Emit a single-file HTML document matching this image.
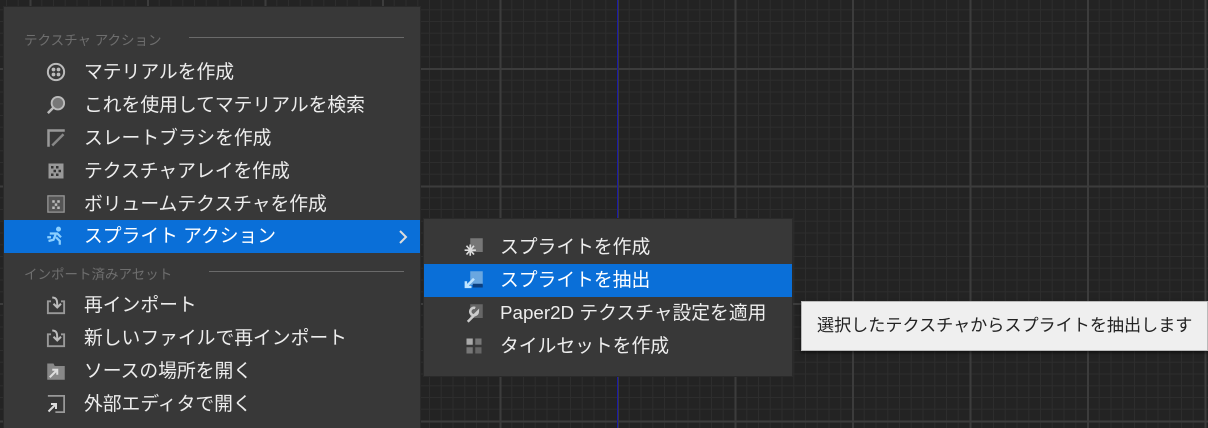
<!DOCTYPE html>
<html><head><meta charset="utf-8"><style>
*{margin:0;padding:0;box-sizing:border-box}
html,body{width:1208px;height:428px;overflow:hidden}
body{position:relative;background-color:#232323;
background-image:
linear-gradient(90deg,#3c3c3c 0 2px,transparent 2px),
linear-gradient(180deg,#3c3c3c 0 2px,transparent 2px),
linear-gradient(90deg,#2d2d2d 0 1px,transparent 1px),
linear-gradient(180deg,#2d2d2d 0 1px,transparent 1px);
background-size:117.5px 117.5px,117.5px 117.5px,11.75px 11.75px,11.75px 11.75px;
background-position:29.5px 0,0 68px,29.5px 0,0 68px;
font-family:"Liberation Sans","Noto Sans CJK JP",sans-serif;}
.blue{position:absolute;left:617px;top:0;width:1px;height:428px;background:#1a1aa8}
.menu{position:absolute;background:#383838;border:1px solid #2a2a2a}
.hdr{position:absolute;font-size:13.5px;color:#6e6e6e;left:20px}
.line{position:absolute;height:1px;background:#6a6a6a}
.it{position:absolute;left:0;right:0;height:33px;color:#ededed;font-size:18.8px;line-height:33px;white-space:nowrap}
.it.sel{background:#0a6fd8;color:#fff}
.it .t{position:absolute;left:80px;top:-1px}
.ic{position:absolute;width:20px;height:20px;top:6px;left:42px}
.tip{position:absolute;left:801px;top:301px;width:407px;height:50px;background:#efefef;border:1px solid #b9b9b9;box-shadow:0 2px 3px rgba(0,0,0,.5);font-size:17.1px;color:#222;line-height:48px;padding-left:15px;white-space:nowrap}
</style></head><body>
<div class="blue"></div>
<div class="menu" style="left:3px;top:6px;width:418px;height:430px">
 <div class="hdr" style="top:22px">テクスチャ アクション</div>
 <div class="line" style="left:185px;width:215px;top:30px"></div>
 <div class="it" style="top:49px"><svg class="ic" viewBox="0 0 16 16"><circle cx="8" cy="8" r="6.5" fill="none" stroke="#bbb" stroke-width="1.6"/><circle cx="6" cy="6" r="1.5" fill="#bbb"/><circle cx="10" cy="6" r="1.5" fill="#bbb"/><circle cx="6" cy="10" r="1.5" fill="#bbb"/><circle cx="10" cy="10" r="1.5" fill="#bbb"/></svg><span class="t">マテリアルを作成</span></div>
 <div class="it" style="top:82px"><svg class="ic" viewBox="0 0 16 16"><circle cx="9.5" cy="6.5" r="5" fill="#777" stroke="#bbb" stroke-width="1.5"/><path d="M6 10L1.5 14.5" stroke="#bbb" stroke-width="2"/></svg><span class="t">これを使用してマテリアルを検索</span></div>
 <div class="it" style="top:115px"><svg class="ic" viewBox="0 0 16 16"><path d="M1 1h14v2H3v12H1z" fill="#999"/><path d="M5 14L14 5" stroke="#888" stroke-width="2"/></svg><span class="t">スレートブラシを作成</span></div>
 <div class="it" style="top:148px"><svg class="ic" viewBox="0 0 16 16"><rect x="2" y="2" width="12" height="12" fill="#999"/><g fill="#333"><rect x="4" y="4" width="2" height="2"/><rect x="8" y="4" width="2" height="2"/><rect x="6" y="7" width="2" height="2"/><rect x="10" y="7" width="2" height="2"/><rect x="4" y="10" width="2" height="2"/><rect x="8" y="10" width="2" height="2"/></g></svg><span class="t">テクスチャアレイを作成</span></div>
 <div class="it" style="top:181px"><svg class="ic" viewBox="0 0 16 16"><rect x="1.5" y="1.5" width="13" height="13" fill="#555" stroke="#999"/><g fill="#bbb"><rect x="5" y="5" width="2" height="2"/><rect x="9" y="5" width="2" height="2"/><rect x="7" y="7.5" width="2" height="2"/><rect x="5" y="10" width="2" height="2"/><rect x="9" y="10" width="2" height="2"/></g></svg><span class="t">ボリュームテクスチャを作成</span></div>
 <div class="it sel" style="top:213px"><svg class="ic" viewBox="0 0 16 16"><circle cx="10" cy="2.5" r="2" fill="#8cd0ff"/><path d="M3 6h6l3 3M8 6l-2 5-4 1M8 9l3 3v3M1 9h3" stroke="#8cd0ff" stroke-width="1.8" fill="none"/></svg><span class="t">スプライト アクション</span><svg style="position:absolute;right:12px;top:10px" width="10" height="14" viewBox="0 0 10 14"><path d="M2 1l6 6-6 6" stroke="#ddd" stroke-width="2" fill="none"/></svg></div>
 <div class="hdr" style="top:256px">インポート済みアセット</div>
 <div class="line" style="left:205px;width:195px;top:264px"></div>
 <div class="it" style="top:282px"><svg class="ic" viewBox="0 0 16 16"><path d="M4 5H1.5v9.5h13V5H12" fill="none" stroke="#999" stroke-width="1.5"/><path d="M5 2c4 0 4 3 4 7M6 7l3 3 3-3" fill="none" stroke="#bbb" stroke-width="1.6"/></svg><span class="t">再インポート</span></div>
 <div class="it" style="top:315px"><svg class="ic" viewBox="0 0 16 16"><path d="M4 5H1.5v9.5h13V5H12" fill="none" stroke="#999" stroke-width="1.5"/><path d="M5 2c4 0 4 3 4 7M6 7l3 3 3-3" fill="none" stroke="#bbb" stroke-width="1.6"/></svg><span class="t">新しいファイルで再インポート</span></div>
 <div class="it" style="top:348px"><svg class="ic" viewBox="0 0 16 16"><path d="M1 2h5l1 2h8v11H1z" fill="#888"/><path d="M3 13l6-6M5 7h4v4" stroke="#ddd" stroke-width="1.6" fill="none"/></svg><span class="t">ソースの場所を開く</span></div>
 <div class="it" style="top:381px"><svg class="ic" viewBox="0 0 16 16"><path d="M1.5 1.5h13v13h-7" fill="none" stroke="#999" stroke-width="1.4"/><path d="M2 14l6-6M4 8h4v4" stroke="#ddd" stroke-width="1.6" fill="none"/></svg><span class="t">外部エディタで開く</span></div>
</div>
<div class="menu" style="left:423px;top:218px;width:370px;height:159px">
 <div class="it" style="top:12px"><svg class="ic" viewBox="0 0 16 16" style="left:40px"><rect x="5" y="1" width="10" height="11" fill="#777"/><path d="M5 6v9M0.5 10.5h9M2 7l6 7M8 7l-6 7" stroke="#ddd" stroke-width="1.3"/></svg><span class="t" style="left:76px">スプライトを作成</span></div>
 <div class="it sel" style="top:45px"><svg class="ic" viewBox="0 0 16 16" style="left:40px"><rect x="5" y="1" width="10" height="11" fill="#6aa7e0"/><rect x="7" y="11" width="8" height="3" fill="#0b3f80"/><path d="M8 7l-6 6M1.5 9v4.5H6" stroke="#bfe4ff" stroke-width="2" fill="none"/></svg><span class="t" style="left:76px">スプライトを抽出</span></div>
 <div class="it" style="top:78px"><svg class="ic" viewBox="0 0 16 16" style="left:40px"><rect x="5" y="1" width="10" height="11" fill="#666"/><path d="M9 4a3 3 0 1 0 2 3L3 15" stroke="#ccc" stroke-width="2" fill="none"/></svg><span class="t" style="left:76px">Paper2D テクスチャ設定を適用</span></div>
 <div class="it" style="top:111px"><svg class="ic" viewBox="0 0 16 16" style="left:40px"><rect x="2" y="2" width="5" height="5" fill="#aaa"/><rect x="9" y="2" width="5" height="5" fill="#777"/><rect x="2" y="9" width="5" height="5" fill="#777"/><rect x="9" y="9" width="5" height="5" fill="#666"/></svg><span class="t" style="left:76px">タイルセットを作成</span></div>
</div>
<div class="tip">選択したテクスチャからスプライトを抽出します</div>
</body></html>
